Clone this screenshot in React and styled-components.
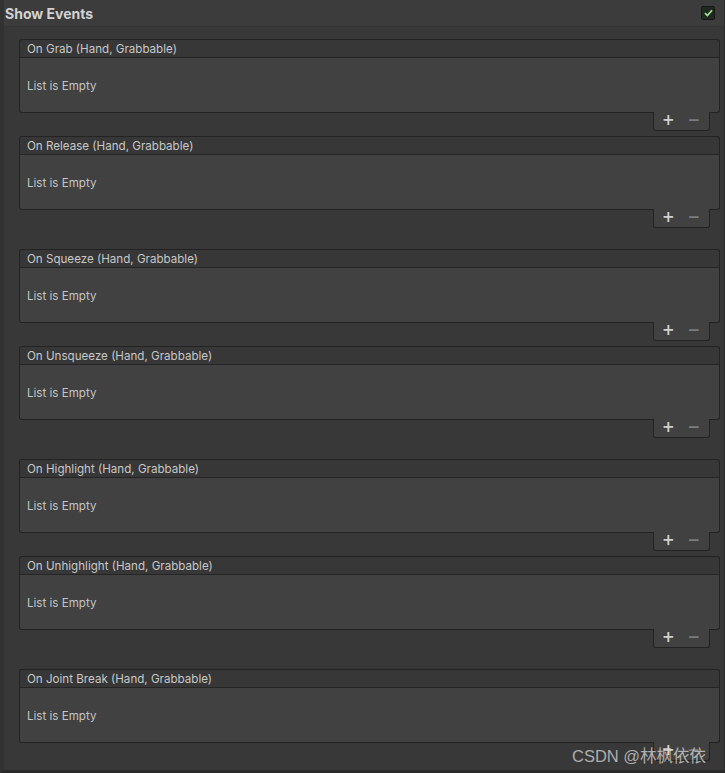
import React from "react";
import styled, { createGlobalStyle } from "styled-components";

const GlobalStyle = createGlobalStyle`
  html, body {
    margin: 0;
    padding: 0;
    background: #383838;
  }
  body {
    font-family: Inter, "Noto Sans", "Liberation Sans", sans-serif;
  }
`;

const events = [
  { name: "On Grab", spaced: false },
  { name: "On Release", spaced: false },
  { name: "On Squeeze", spaced: true },
  { name: "On Unsqueeze", spaced: false },
  { name: "On Highlight", spaced: true },
  { name: "On Unhighlight", spaced: false },
  { name: "On Joint Break", spaced: true },
];

function App() {
  return (
    <Inspector>
      <GlobalStyle />
      <Foldout>
        <div className="title">Show Events</div>
        <Checkbox>
          <svg width="9" height="8" viewBox="0 0 9 8">
            <path d="M1 4.2 L3.4 6.5 L8 1.2" fill="none" stroke="#a6e0a0" strokeWidth="1.7" />
          </svg>
        </Checkbox>
      </Foldout>
      <EventList>
        {events.map((ev) => (
          <EventGroup key={ev.name} $spaced={ev.spaced}>
            <GroupHeader>{ev.name} (Hand, Grabbable)</GroupHeader>
            <GroupBody>List is Empty</GroupBody>
            <Footer>
              <FooterTab>
                <ListButton>+</ListButton>
                <ListButton $disabled>−</ListButton>
              </FooterTab>
            </Footer>
          </EventGroup>
        ))}
      </EventList>
      <Watermark>CSDN @林枫依依</Watermark>
    </Inspector>
  );
}

export default App;

const Inspector = styled.div`
  position: relative;
  width: 725px;
  min-height: 773px;
  box-sizing: border-box;
  background: #383838;
  border-left: 4px solid #323232;
  border-bottom: 3px solid #2a2a2a;
  border-right: 1px solid #2c2c2c;
  color: #c4c4c4;
  overflow: hidden;
`;

const Foldout = styled.div`
  height: 26px;
  display: flex;
  align-items: center;
  justify-content: space-between;
  padding: 0 9px 0 1px;
  background: #3c3c3c;
  border-bottom: 1px solid #333333;

  .title {
    font-size: 14px;
    font-weight: 700;
    color: #d2d2d2;
  }
`;

const Checkbox = styled.div`
  width: 12px;
  height: 12px;
  display: flex;
  align-items: center;
  justify-content: center;
  background: #1f2a1f;
  border: 1px solid #171717;
  border-radius: 2px;
  margin-top: -1px;
`;

const EventList = styled.div`
  display: flex;
  flex-direction: column;
  padding: 12px 4px 0 15px;
`;

const EventGroup = styled.div`
  display: flex;
  flex-direction: column;
  margin-top: ${(p) => (p.$spaced ? "21px" : "5px")};

  &:first-child {
    margin-top: 0;
  }
`;

const GroupHeader = styled.div`
  height: 17px;
  line-height: 18px;
  padding-left: 7px;
  font-size: 11.6px;
  color: #c8c8c8;
  background: #373737;
  border: 1px solid #232323;
  border-bottom: 1px solid #252525;
  border-radius: 3px 3px 0 0;
`;

const GroupBody = styled.div`
  height: 55px;
  display: flex;
  align-items: center;
  padding: 1px 0 0 7px;
  box-sizing: border-box;
  font-size: 11.6px;
  color: #c4c4c4;
  background: #414141;
  border: 1px solid #232323;
  border-top: none;
  border-radius: 0 0 3px 3px;
`;

const Footer = styled.div`
  display: flex;
  justify-content: flex-end;
  padding-right: 10px;
`;

const FooterTab = styled.div`
  position: relative;
  margin-top: -1px;
  width: 57px;
  height: 19px;
  box-sizing: border-box;
  display: flex;
  align-items: center;
  gap: 13px;
  padding: 0 0 1px 8px;
  background: #414141;
  border: 1px solid #232323;
  border-top: none;
  border-radius: 0 0 3px 3px;
`;

const ListButton = styled.span`
  font-family: "DejaVu Sans", sans-serif;
  font-size: 15px;
  font-weight: 700;
  line-height: 15px;
  color: ${(p) => (p.$disabled ? "#7d7d7d" : "#d0d0d0")};
`;

const Watermark = styled.div`
  position: absolute;
  left: 568px;
  top: 743px;
  font-family: "Liberation Sans", "Noto Sans CJK SC", sans-serif;
  font-size: 16.5px;
  color: rgba(215, 215, 215, 0.75);
`;
